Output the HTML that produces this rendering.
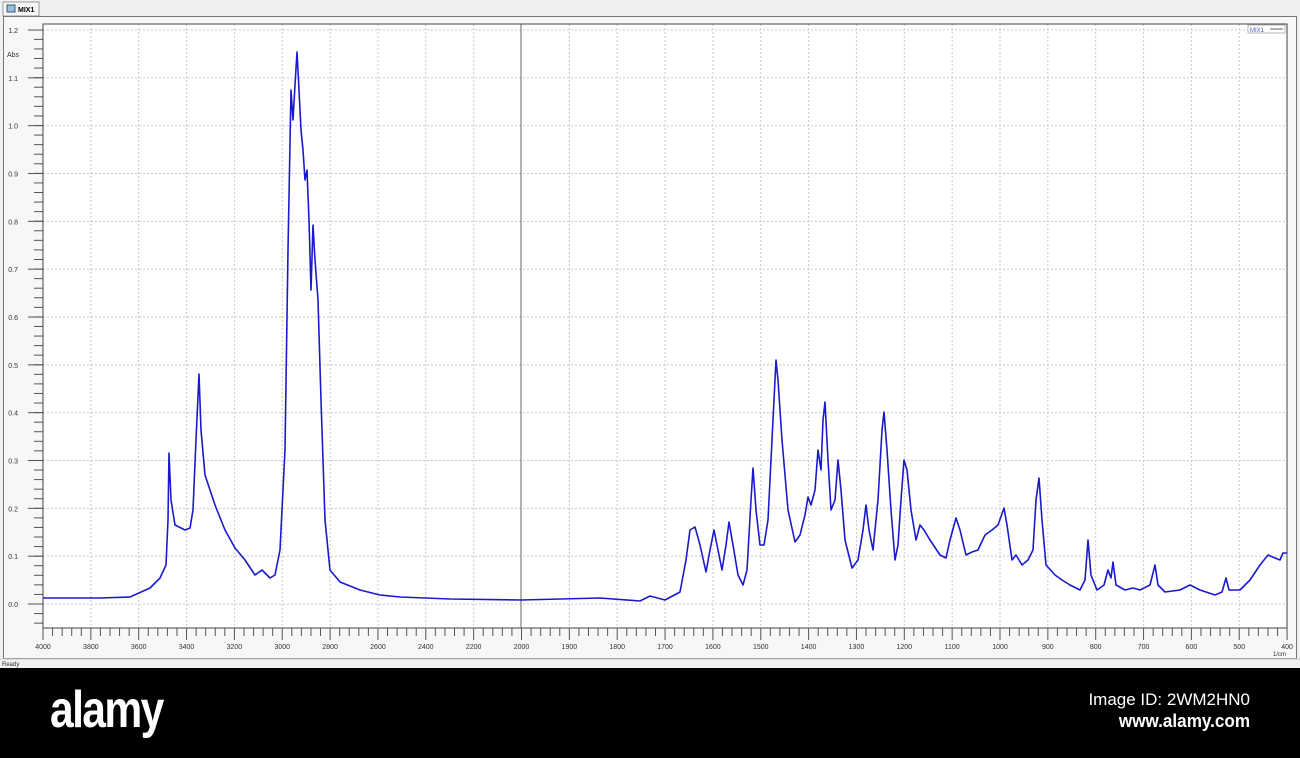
<!DOCTYPE html>
<html><head><meta charset="utf-8"><style>
html,body{margin:0;padding:0;width:1300px;height:758px;overflow:hidden;background:#f0f0f0;font-family:"Liberation Sans",sans-serif}
#black{position:absolute;left:0;top:668px;width:1300px;height:90px;background:#000}
.logo{position:absolute;left:50px;top:680px;color:#fff;font-size:52px;font-weight:bold;letter-spacing:-2px;transform:scaleX(0.82);transform-origin:left top}
.id{position:absolute;right:50px;top:690px;color:#fff;font-size:17px}
.www{position:absolute;right:50px;top:711px;color:#fff;font-size:18px;font-weight:bold;transform:scaleX(0.95);transform-origin:right top}
</style></head><body>
<svg id="s" width="1300" height="668" style="position:absolute;left:0;top:0" font-family="Liberation Sans, sans-serif"></svg>
<div id="black"></div>
<div class="logo">alamy</div>
<div class="id">Image ID: 2WM2HN0</div>
<div class="www">www.alamy.com</div>
<script>
var h='';
h+='<rect x="0" y="0" width="1300" height="668" fill="#f0f0f0"/>';
h+='<rect x="3" y="2" width="36" height="14" fill="#f8f8f8" stroke="#999"/>';
h+='<rect x="7" y="5" width="8" height="7" fill="#9bd" stroke="#357"/>';
h+='<text x="18" y="12" font-size="7" font-weight="bold">MIX1</text>';
h+='<rect x="3.5" y="16.5" width="1293" height="642" fill="#f7f7f7" stroke="#777"/>';
h+='<rect x="43" y="24" width="1244" height="604" fill="#fff"/>';
var L=43,R=1287,T=24,B=628;
for(var k=0;k<=26;k++){var x=L+k*47.85;if(k==10)continue;
 h+='<line x1="'+x+'" y1="'+T+'" x2="'+x+'" y2="'+B+'" stroke="#c8c8c8" stroke-dasharray="2,2"/>';}
for(var k=0;k<=12;k++){var y=604-k*47.83;
 h+='<line x1="'+L+'" y1="'+y+'" x2="'+R+'" y2="'+y+'" stroke="#c8c8c8" stroke-dasharray="2,2"/>';
 h+='<line x1="28" y1="'+y+'" x2="43" y2="'+y+'" stroke="#555"/>';
 h+='<text x="18" y="'+(y+3)+'" font-size="7" text-anchor="end" fill="#333">'+(k/10).toFixed(1)+'</text>';}
for(var y=604+9.57*2;y>=30;y-=9.57){h+='<line x1="34" y1="'+y+'" x2="43" y2="'+y+'" stroke="#555"/>';}
h+='<text x="7" y="57" font-size="7" fill="#333">Abs</text>';
h+='<line x1="521" y1="'+T+'" x2="521" y2="'+B+'" stroke="#666"/>';
h+='<rect x="43" y="24" width="1244" height="604" fill="none" stroke="#444"/>';
var labs=[4000,3800,3600,3400,3200,3000,2800,2600,2400,2200,2000,1900,1800,1700,1600,1500,1400,1300,1200,1100,1000,900,800,700,600,500,400];
for(var k=0;k<=26;k++){var x=L+k*47.85;
 h+='<line x1="'+x+'" y1="628" x2="'+x+'" y2="640" stroke="#555"/>';
 h+='<text x="'+x+'" y="649" font-size="7" text-anchor="middle" fill="#333">'+labs[k]+'</text>';
 if(k<26)for(var j=1;j<5;j++){var xx=x+j*9.57;h+='<line x1="'+xx+'" y1="628" x2="'+xx+'" y2="636" stroke="#555"/>';}}
h+='<text x="1273" y="656" font-size="6" fill="#333">1/cm</text>';
h+='<rect x="1248" y="25" width="37" height="8" fill="#fff" stroke="#888" stroke-width="0.6"/><text x="1250" y="32" font-size="6" fill="#55c">MIX1</text><line x1="1270" y1="29" x2="1283" y2="29" stroke="#666"/>';
h+='<line x1="0" y1="659" x2="1300" y2="659" stroke="#ccc"/><text x="2" y="666" font-size="6" fill="#333">Ready</text>';
var p="43,598 100,598 130,597 150,588 160,578 166,565 168,520 169,453 171,500 175,525 185,530 190,528 193,510 196,440 199,374 201,430 205,475 215,505 225,530 235,548 245,560 255,575 262,570 270,578 275,575 280,550 285,450 288,250 291,90 293,120 295,85 297,52 299,90 301,130 303,150 305,180 307,170 309,220 311,290 313,225 315,260 318,300 321,400 325,520 330,570 340,582 360,590 380,595 400,597 450,599 521,600 600,598 640,601 650,596 665,600 680,592 686,560 690,530 695,527 700,545 706,572 710,550 714,530 718,550 722,570 726,545 729,522 733,545 738,575 743,585 747,570 751,500 753,468 756,510 760,545 764,545 768,520 772,440 776,360 778,380 782,440 788,510 795,542 800,535 805,515 808,497 811,505 815,490 818,450 821,470 823,420 825,402 828,460 831,510 835,500 838,460 841,490 845,540 852,568 858,560 863,530 866,505 869,530 873,550 878,500 882,430 884,412 887,450 891,510 895,560 898,545 901,500 904,460 907,470 911,510 916,540 920,525 924,530 930,540 940,555 946,558 950,540 956,518 960,530 966,555 972,552 978,550 985,535 992,530 998,525 1004,508 1007,525 1012,560 1016,555 1022,565 1028,560 1033,550 1036,500 1039,478 1042,520 1046,565 1055,575 1062,580 1070,585 1080,590 1085,580 1088,540 1091,575 1097,590 1104,585 1108,570 1111,578 1113,562 1116,585 1125,590 1133,588 1140,590 1150,585 1155,565 1158,585 1165,592 1180,590 1190,585 1200,590 1215,595 1222,592 1226,578 1229,590 1240,590 1250,580 1260,565 1268,555 1275,558 1280,560 1283,553 1287,553";
h+='<polyline points="'+p+'" fill="none" stroke="#1a1acc" stroke-width="1.6" stroke-linejoin="round"/>';
document.getElementById('s').innerHTML=h;
</script>
</body></html>
